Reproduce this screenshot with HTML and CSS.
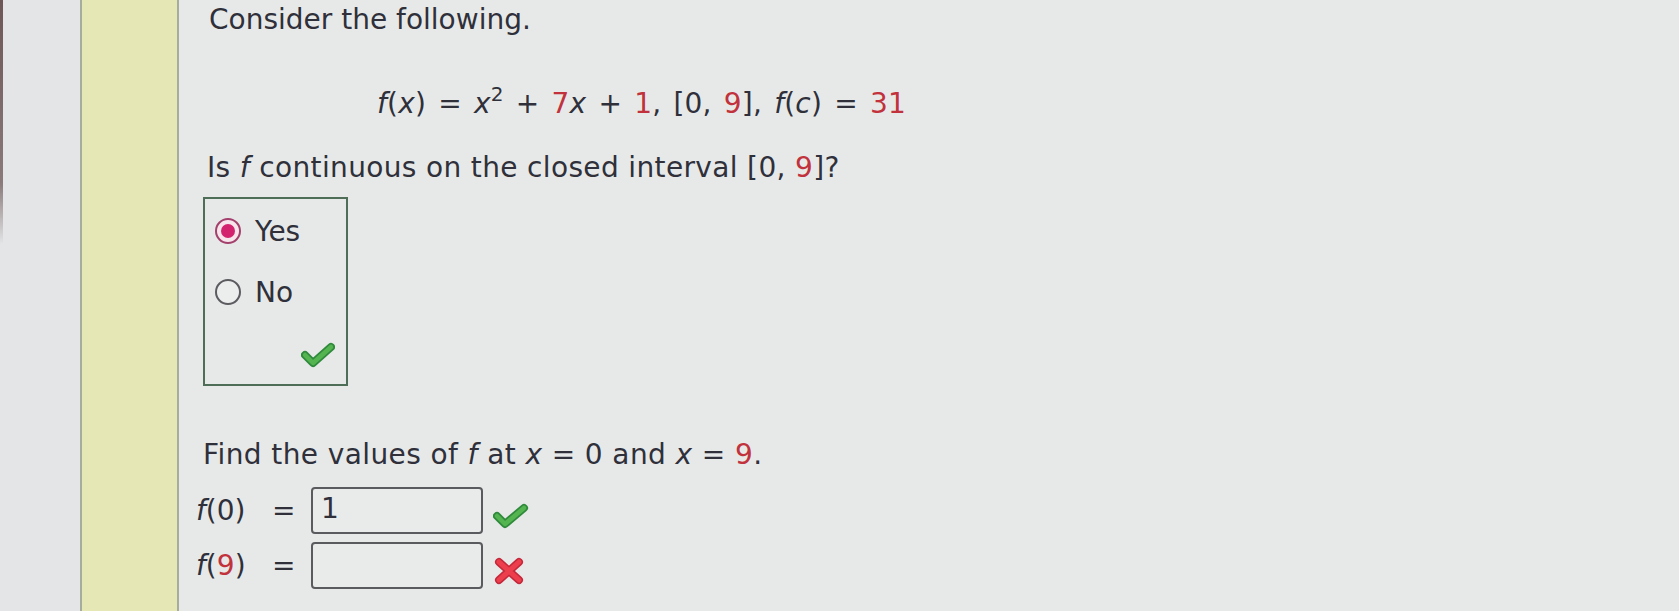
FILE: index.html
```html
<!DOCTYPE html>
<html lang="en">
<head>
<meta charset="utf-8">
<title>Consider the following</title>
<link rel="stylesheet" href="styles.css">
</head>
<body>
<div class="page">
  <div class="rail"></div>
  <div class="strip"></div>
  <main class="main">
    <p class="title">Consider the following.</p>
    <p class="equation"><i>f</i>(<i>x</i>) = <i>x</i><sup>2</sup> + <span class="n">7</span><i>x</i> + <span class="n">1</span>, [0, <span class="n">9</span>], <i>f</i>(<i>c</i>) = <span class="n">31</span></p>
    <p class="question">Is <i>f</i> continuous on the closed interval [0, <span class="n">9</span>]?</p>
    <div class="choices">
      <div class="choice"><span class="radio radio-on"><span class="dot"></span></span><span>Yes</span></div>
      <div class="choice choice-second"><span class="radio"></span><span>No</span></div>
      <div class="box-mark">
        <svg width="34" height="26" viewBox="0 0 34 26"><path d="M4 13 L12 21 L30 5" fill="none" stroke="#2f8a3c" stroke-width="8" stroke-linecap="round" stroke-linejoin="round"/><path d="M4 13 L12 21 L30 5" fill="none" stroke="#54b450" stroke-width="4.5" stroke-linecap="round" stroke-linejoin="round"/></svg>
      </div>
    </div>
    <p class="find">Find the values of <i>f</i> at <i>x</i> = 0 and <i>x</i> = <span class="n">9</span>.</p>
    <div class="answers">
      <div class="answer">
        <span class="label"><i>f</i>(0)</span><span class="eq">=</span>
        <span class="input">1</span>
        <svg class="mark" width="36" height="26" viewBox="0 0 36 26"><path d="M4 13 L12 21 L31 5" fill="none" stroke="#2f8a3c" stroke-width="8" stroke-linecap="round" stroke-linejoin="round"/><path d="M4 13 L12 21 L31 5" fill="none" stroke="#54b450" stroke-width="4.5" stroke-linecap="round" stroke-linejoin="round"/></svg>
      </div>
      <div class="answer">
        <span class="label"><i>f</i>(<span class="n">9</span>)</span><span class="eq">=</span>
        <span class="input"></span>
        <svg class="mark" width="32" height="30" viewBox="0 0 32 30"><path d="M6 6 L26 24 M26 6 L6 24" fill="none" stroke="#c4283a" stroke-width="8" stroke-linecap="round"/><path d="M6 6 L26 24 M26 6 L6 24" fill="none" stroke="#ec3e4c" stroke-width="5" stroke-linecap="round"/></svg>
      </div>
    </div>
  </main>
</div>
</body>
</html>
```
FILE: styles.css
```css
html, body {
  margin: 0;
  padding: 0;
}
body {
  background: #e7e9e9;
  color: #2f303a;
  font-family: "DejaVu Sans", Verdana, sans-serif;
  font-size: 28px;
  overflow: hidden;
}
.page {
  display: flex;
  height: 611px;
}
.rail {
  width: 80px;
  background: #e3e5e7;
  border-left: 3px solid;
  border-image: linear-gradient(to bottom, #6e5656 0%, #8a7a7a 30%, #e3e5e7 40%) 1;
  box-sizing: border-box;
}
.strip {
  width: 95px;
  background: #e5e8b4;
  border-left: 2px solid #a7ad9c;
  border-right: 2px solid #a7ad9c;
}
.main {
  flex: 1;
  padding-left: 24px;
}
p {
  margin: 0;
  line-height: 40px;
}
i {
  font-style: italic;
}
.n {
  color: #c1323c;
}
sup {
  font-size: 20px;
  line-height: 0;
  vertical-align: 12px;
}
.title {
  margin-top: 0;
  margin-left: 6px;
}
.equation {
  margin-top: 44px;
  padding-left: 174px;
  word-spacing: 3px;
  letter-spacing: 0.2px;
}
.question {
  margin-top: 24px;
  margin-left: 4px;
  letter-spacing: 0.35px;
}
.choices {
  margin-top: 9px;
  width: 145px;
  height: 189px;
  box-sizing: border-box;
  border: 2px solid #4e6e58;
  padding: 12px 11px 0 10px;
  display: flex;
  flex-direction: column;
}
.choice {
  display: flex;
  align-items: center;
  gap: 14px;
  height: 40px;
}
.choice-second {
  margin-top: 21px;
}
.radio {
  width: 26px;
  height: 26px;
  box-sizing: border-box;
  border: 2px solid #5b5b60;
  border-radius: 50%;
  background: #eceeee;
  display: flex;
  align-items: center;
  justify-content: center;
}
.radio-on {
  border-color: #a3406c;
  background: #f6e6ec;
}
.dot {
  width: 14px;
  height: 14px;
  border-radius: 50%;
  background: #d4236e;
}
.box-mark {
  margin-top: 30px;
  align-self: flex-end;
  height: 26px;
}
.find {
  margin-top: 49px;
  letter-spacing: 0.4px;
}
.answers {
  margin-top: 12px;
  margin-left: -7px;
  display: flex;
  flex-direction: column;
  gap: 8px;
}
.answer {
  display: flex;
  align-items: center;
  height: 47px;
}
.label {
  width: 76px;
}
.eq {
  width: 39px;
}
.input {
  width: 172px;
  height: 47px;
  box-sizing: border-box;
  border: 2px solid #5a5b5e;
  border-radius: 4px;
  background: #e9ebeb;
  padding-left: 8px;
  line-height: 40px;
}
.mark {
  margin-left: 10px;
  margin-top: 10px;
}
```
